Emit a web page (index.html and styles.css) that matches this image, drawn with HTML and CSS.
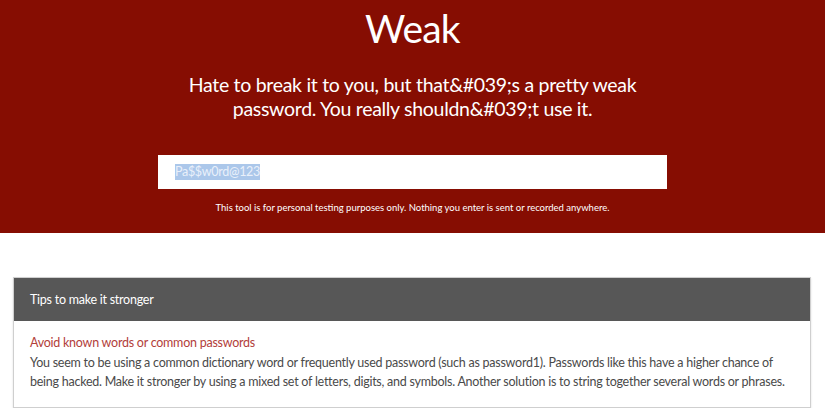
FILE: index.html
```html
<!DOCTYPE html>
<html lang="en">
<head>
<meta charset="utf-8">
<title>Weak</title>
<link rel="stylesheet" href="styles.css">
</head>
<body>
<section class="hero">
  <h1 class="verdict">Weak</h1>
  <p class="summary">Hate to break it to you, but that&amp;#039;s a pretty weak password. You really shouldn&amp;#039;t use it.</p>
  <div class="field"><span class="selected">Pa$$w0rd@123</span></div>
  <p class="note">This tool is for personal testing purposes only. Nothing you enter is sent or recorded anywhere.</p>
</section>
<section class="tips">
  <div class="tips-head">Tips to make it stronger</div>
  <div class="tips-body">
    <div class="tip-title">Avoid known words or common passwords</div>
    <p class="tip-text">You seem to be using a common dictionary word or frequently used password (such as password1). Passwords like this have a higher chance of being hacked. Make it stronger by using a mixed set of letters, digits, and symbols. Another solution is to string together several words or phrases.</p>
  </div>
</section>
</body>
</html>
```
FILE: styles.css
```css
* { box-sizing: border-box; }
html, body { margin: 0; padding: 0; background: #fff; }
body { font-family: Lato, "Open Sans", sans-serif; }

.hero {
  background: #860d02;
  height: 233px;
  padding-top: 4px;
  display: flex;
  flex-direction: column;
  align-items: center;
  color: #fff;
}
.verdict {
  margin: 0;
  font-size: 39px;
  font-weight: 400;
  line-height: 48px;
  letter-spacing: -0.8px;
}
.summary {
  margin: 21px 0 0;
  max-width: 470px;
  text-align: center;
  font-size: 19.5px;
  letter-spacing: -0.3px;
  line-height: 24px;
}
.field {
  margin-top: 34px;
  width: 509px;
  height: 34px;
  background: #fff;
  padding-left: 17px;
  display: flex;
  align-items: center;
  font-size: 12.5px;
  letter-spacing: -0.3px;
}
.selected {
  background: #abc7ea;
  color: #e9f0fa;
  line-height: 16px;
}
.note {
  margin: 13px 0 0;
  font-size: 9.5px;
  line-height: 12px;
}

.tips {
  margin: 44px 14px 0 13px;
  border: 1px solid #cfcfcf;
  box-shadow: 0 1px 2px rgba(0,0,0,0.12);
  font-size: 12.5px;
  letter-spacing: -0.25px;
}
.tips-head {
  background: #575757;
  color: #fff;
  height: 43px;
  padding-left: 16px;
  display: flex;
  align-items: center;
}
.tips-body {
  padding: 12px 16px 15px;
  line-height: 19.5px;
}
.tip-title { color: #b2403a; }
.tip-text { margin: 0; color: #4a4a4a; }
```
